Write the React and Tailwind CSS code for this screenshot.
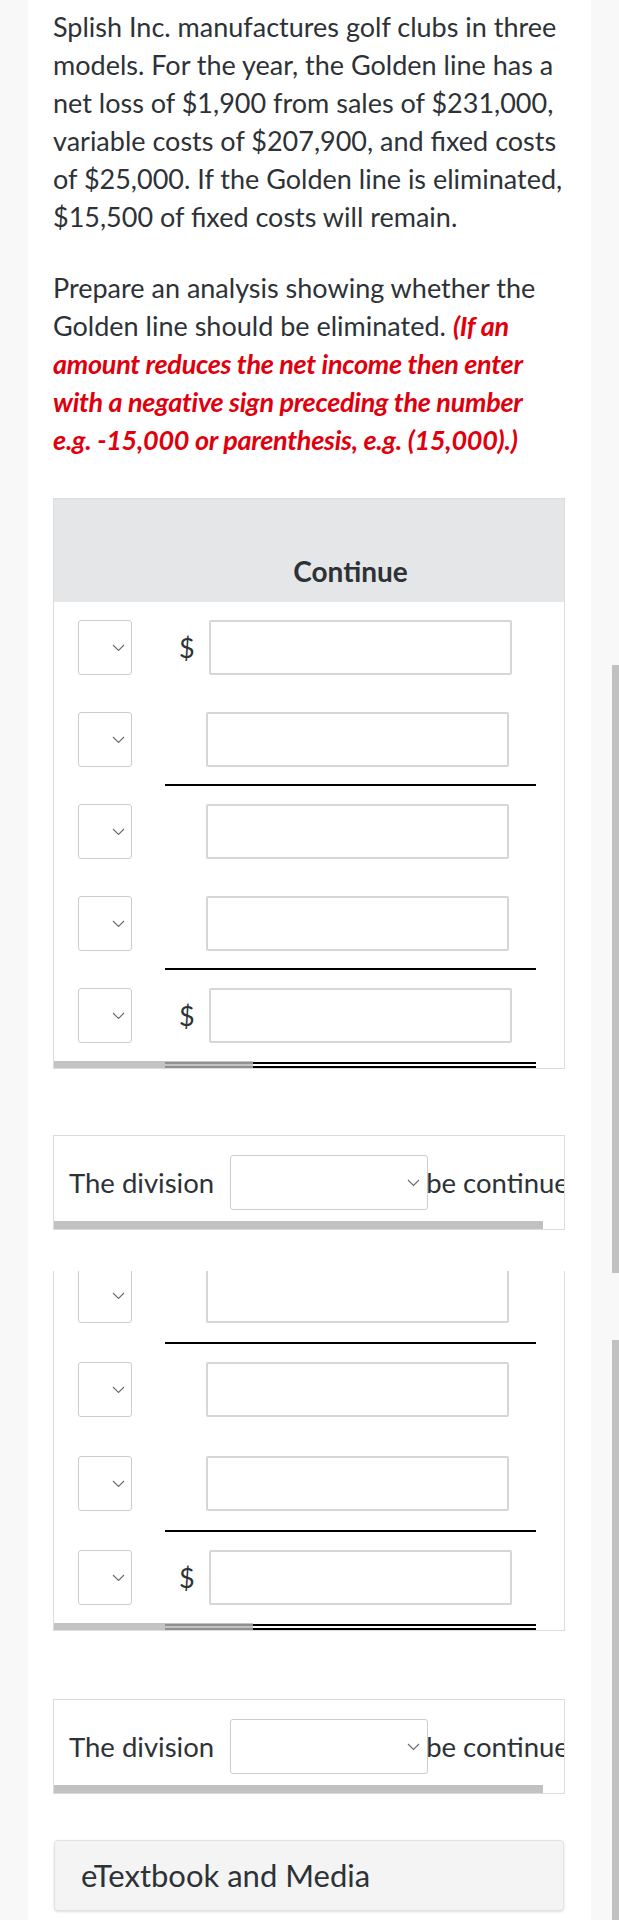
import React from 'react'

function Chevron() {
  return (
    <svg width="13" height="8" viewBox="0 0 13 8" fill="none">
      <path d="M1 1l5.5 5.5L12 1" stroke="#6a6a6a" strokeWidth="1.1" />
    </svg>
  )
}

function Select({ wide = false }) {
  return (
    <div
      className={`flex h-[55px] shrink-0 items-center justify-end rounded-[3px] border border-[#cdcdcd] bg-white ${
        wide ? 'w-[198px] pr-[7px]' : 'w-[54px] pr-[6px]'
      }`}
    >
      <Chevron />
    </div>
  )
}

function Row({ dollar = false, line = 'none', tall = false, last = false }) {
  const height = last ? 'h-[98px]' : tall ? 'h-[94px]' : 'h-[92px]'
  const lineCls =
    line === 'single'
      ? 'border-b-2 border-black'
      : line === 'double'
        ? 'border-b-[6px] border-double border-black'
        : ''

  return (
    <div className={`flex ${height}`}>
      <div className="w-[111px] shrink-0 pl-[24px] pt-[18px]">
        <Select />
      </div>
      <div className={`w-[371px] shrink-0 pt-[18px] ${lineCls}`}>
        <div className="flex items-center">
          {dollar ? (
            <span className="w-[44px] shrink-0 pl-[14px] text-[27px] leading-none">$</span>
          ) : (
            <span className="w-[41px] shrink-0" />
          )}
          <input
            type="text"
            className="h-[55px] w-[303px] rounded-[2px] border-2 border-[#d6d6d6] bg-white outline-none"
          />
        </div>
      </div>
    </div>
  )
}

function Division({ className = '' }) {
  return (
    <div className={`relative h-[95px] overflow-hidden border border-[#dcdcdc] ${className}`}>
      <div className="flex items-center whitespace-nowrap pl-[15px] pt-[19px] text-[27.5px]">
        <span>The division</span>
        <div className="ml-[16px]">
          <Select wide />
        </div>
        <span className="-ml-[2px]">be continue</span>
      </div>
      <div className="absolute bottom-0 left-0 h-[8px] w-[489px] bg-[#c1c1c1]" />
    </div>
  )
}

export default function App() {
  return (
    <div className="flex min-h-[1920px] w-[619px] bg-[#f8f8f8] font-['Lato',sans-serif] text-[#2d3237]">
      <div className="w-[28px] shrink-0" />

      <main className="w-[563px] shrink-0 bg-white pb-[7px] pl-[25px] pr-[26px] pt-[8px]">
        <p className="text-[27px] leading-[38px]">
          Splish Inc. manufactures golf clubs in three models. For the year, the Golden line has a net loss of
          $1,900 from sales of $231,000, variable costs of $207,900, and fixed costs of $25,000. If the Golden
          line is eliminated, $15,500 of fixed costs will remain.
        </p>

        <p className="mt-[33px] text-[27px] leading-[38px]">
          Prepare an analysis showing whether the Golden line should be eliminated.{' '}
          <span className="font-bold italic tracking-[-0.01em] text-[#e0000d]">
            (If an amount reduces the net income then enter with a negative sign preceding the number
            {' e.g.\u00a0-15,000 '}or parenthesis, e.g. (15,000).)
          </span>
        </p>

        {/* first table */}
        <div className="relative mt-[39px] border border-[#dcdcdc]">
          <div className="flex h-[103px] items-end bg-[#e5e6e7]">
            <div className="w-[111px] shrink-0" />
            <div className="w-[371px] shrink-0 pb-[15px] text-center text-[28px] font-bold leading-[32px]">
              Continue
            </div>
          </div>
          <Row dollar />
          <Row line="single" />
          <Row />
          <Row line="single" />
          <Row dollar line="double" last />
          <div className="absolute bottom-0 left-0 h-[7px] w-[199px] bg-[#b4b4b4]/80" />
        </div>

        <Division className="mt-[66px]" />

        {/* second table, scrolled so its top is cut */}
        <div className="relative mt-[41px] overflow-hidden border-x border-b border-[#dcdcdc]">
          <div className="-mt-[21px]">
            <Row tall line="single" />
            <Row tall />
            <Row tall line="single" />
            <Row tall dollar line="double" last />
          </div>
          <div className="absolute bottom-0 left-0 h-[7px] w-[199px] bg-[#b4b4b4]/80" />
        </div>

        <Division className="mt-[68px]" />

        <div className="mx-[1px] mt-[46px] flex h-[71px] items-center rounded-[4px] border border-[#e2e2e2] bg-[#f4f4f4] pl-[26px] text-[31px] shadow-sm">
          eTextbook and Media
        </div>
      </main>

      <div className="flex w-[28px] shrink-0 flex-col items-end">
        <div className="mt-[665px] h-[608px] w-[7px] bg-[#c1c1c1]" />
        <div className="mt-[67px] w-[7px] flex-1 bg-[#c1c1c1]" />
      </div>
    </div>
  )
}
